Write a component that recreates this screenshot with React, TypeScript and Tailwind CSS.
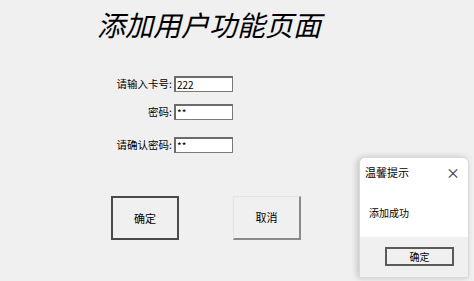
import React, { useState } from 'react';

const font = { fontFamily: '"Noto Sans CJK SC", "Liberation Sans", sans-serif' };

const Field: React.FC<{ label: string; value: string; mt: string }> = ({ label, value, mt }) => (
    <div className={`flex items-center ${mt}`}>
        <label className="w-[173px] pr-[1px] text-right text-[10.5px] text-black">{label}</label>
        <input
            type="text"
            defaultValue={value}
            className="ml-[1px] h-[16px] w-[59px] border border-[#7a7a7a] border-t-[2px] border-l-[2px] border-t-[#6b6b6b] border-l-[#6b6b6b] bg-white px-[1px] text-[10px] text-black outline-none"
        />
    </div>
);

const App: React.FC = () => {
    const [open, setOpen] = useState(true);

    return (
        <div className="relative h-[281px] w-[474px] overflow-hidden bg-[#f0f0f0]" style={font}>
            <h1 className="pl-[97px] pt-[7px] text-[28px] leading-[34px] italic text-black">添加用户功能页面</h1>

            <Field label="请输入卡号:" value="222" mt="mt-[35px]" />
            <Field label="密码:" value="**" mt="mt-[12px]" />
            <Field label="请确认密码:" value="**" mt="mt-[17px]" />

            <div className="mt-[43px] flex pl-[111px]">
                <button className="h-[44px] w-[68px] border-2 border-[#4a4a4a] bg-[#f0f0f0] text-[11px] text-black">确定</button>
                <button className="ml-[54px] h-[44px] w-[68px] border border-[#e4e4e4] border-b-[2px] border-r-[2px] border-b-[#8a8a8a] border-r-[#8a8a8a] bg-[#f0f0f0] text-[11px] text-black">
                    取消
                </button>
            </div>

            {open && (
                <div className="absolute left-[359px] top-[157px] flex h-[121px] w-[110px] flex-col rounded-t-[6px] border border-[#d9d9d9] bg-white shadow-[-2px_0_6px_rgba(0,0,0,0.18)]">
                    <div className="flex h-[28px] items-center justify-between pl-[5px] pr-[8px]">
                        <span className="text-[11px] text-black">温馨提示</span>
                        <button onClick={() => setOpen(false)} className="text-[14px] leading-none text-[#333]">×</button>
                    </div>
                    <div className="flex-1 pl-[9px] pt-[19px] text-[10px] text-black">添加成功</div>
                    <div className="flex h-[40px] items-start justify-end bg-[#f0f0f0] pr-[14px] pt-[10px]">
                        <button
                            onClick={() => setOpen(false)}
                            className="h-[19px] w-[69px] border-2 border-[#5a5a5a] bg-[#f0f0f0] text-[10px] text-black"
                        >
                            确定
                        </button>
                    </div>
                </div>
            )}
        </div>
    );
};

export default App;
